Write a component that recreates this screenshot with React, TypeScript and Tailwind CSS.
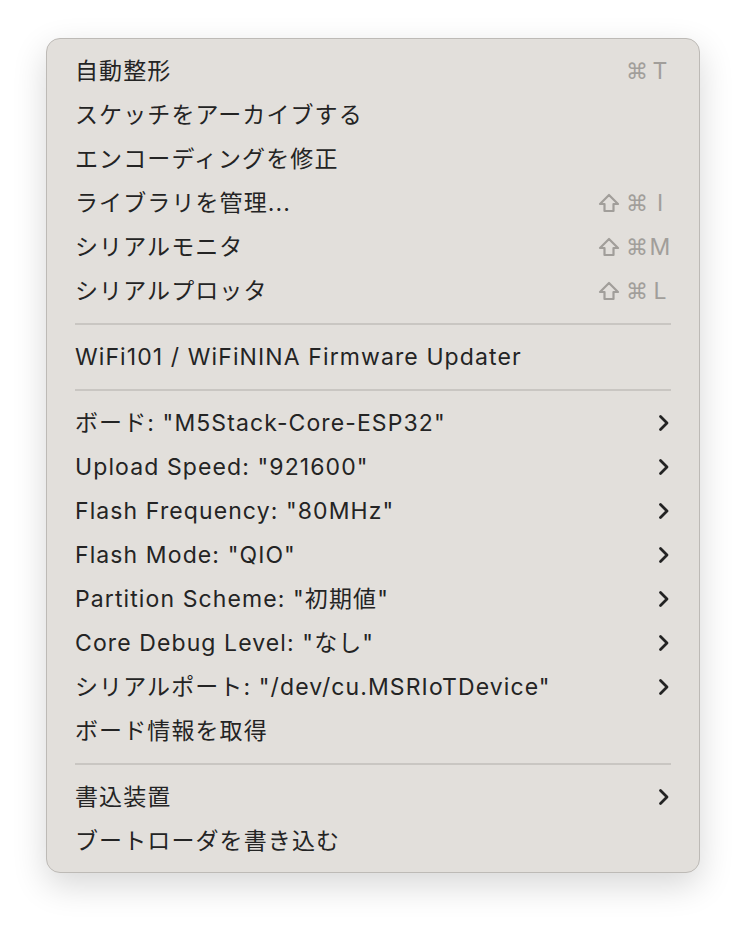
import React from "react";

type Item =
  | { kind: "sep" }
  | { kind: "item"; label: string; keys?: { shift?: boolean; key: string }; sub?: boolean };

const items: Item[] = [
  { kind: "item", label: "自動整形", keys: { key: "T" } },
  { kind: "item", label: "スケッチをアーカイブする" },
  { kind: "item", label: "エンコーディングを修正" },
  { kind: "item", label: "ライブラリを管理...", keys: { shift: true, key: "I" } },
  { kind: "item", label: "シリアルモニタ", keys: { shift: true, key: "M" } },
  { kind: "item", label: "シリアルプロッタ", keys: { shift: true, key: "L" } },
  { kind: "sep" },
  { kind: "item", label: "WiFi101 / WiFiNINA Firmware Updater" },
  { kind: "sep" },
  { kind: "item", label: 'ボード: "M5Stack-Core-ESP32"', sub: true },
  { kind: "item", label: 'Upload Speed: "921600"', sub: true },
  { kind: "item", label: 'Flash Frequency: "80MHz"', sub: true },
  { kind: "item", label: 'Flash Mode: "QIO"', sub: true },
  { kind: "item", label: 'Partition Scheme: "初期値"', sub: true },
  { kind: "item", label: 'Core Debug Level: "なし"', sub: true },
  { kind: "item", label: 'シリアルポート: "/dev/cu.MSRIoTDevice"', sub: true },
  { kind: "item", label: "ボード情報を取得" },
  { kind: "sep" },
  { kind: "item", label: "書込装置", sub: true },
  { kind: "item", label: "ブートローダを書き込む" },
];

function ShiftIcon() {
  return (
    <svg width="22" height="20" viewBox="0 0 22 20" fill="none">
      <path
        d="M11 2 L20 11 H15.5 V18 H6.5 V11 H2 Z"
        stroke="#a19e9a"
        strokeWidth="2.2"
        strokeLinejoin="round"
      />
    </svg>
  );
}

function Chevron() {
  return (
    <svg width="12" height="18" viewBox="0 0 12 18" fill="none">
      <path
        d="M2.5 2.5 L9 9 L2.5 15.5"
        stroke="#232323"
        strokeWidth="2.8"
        strokeLinecap="round"
        strokeLinejoin="round"
      />
    </svg>
  );
}

export default function App() {
  return (
    <div className="min-h-[926px] w-[746px] bg-white pt-[38px] pl-[46px]">
      <div
        className="w-[654px] rounded-[14px] border border-[#bdbab6] bg-[#e2dfdb] pt-[10px] pb-[9px] shadow-[0_12px_34px_rgba(0,0,0,0.16)]"
        style={{ fontFamily: 'Inter, "Noto Sans CJK JP", sans-serif' }}
      >
        {items.map((it, i) =>
          it.kind === "sep" ? (
            <div key={i} className="flex h-[22px] items-center px-[28px]">
              <div className="h-[2px] w-full bg-[#c9c6c2]" />
            </div>
          ) : (
            <div
              key={i}
              className="flex h-[44px] items-center pl-[28px] pr-[27px] text-[#242424]"
            >
              <span className="flex-1 whitespace-nowrap text-[23px] tracking-[1.1px]">{it.label}</span>
              {it.keys && (
                <span className="flex items-center text-[#a19e9a]">
                  {it.keys.shift && (
                    <span className="mr-[6px] flex items-center">
                      <ShiftIcon />
                    </span>
                  )}
                  <span className="text-[22px]" style={{ fontFamily: '"DejaVu Sans", sans-serif' }}>
                    ⌘
                  </span>
                  <span className="w-[24px] text-center text-[23px]">{it.keys.key}</span>
                </span>
              )}
              {it.sub && (
                <span className="mr-[2px] flex items-center">
                  <Chevron />
                </span>
              )}
            </div>
          )
        )}
      </div>
    </div>
  );
}
